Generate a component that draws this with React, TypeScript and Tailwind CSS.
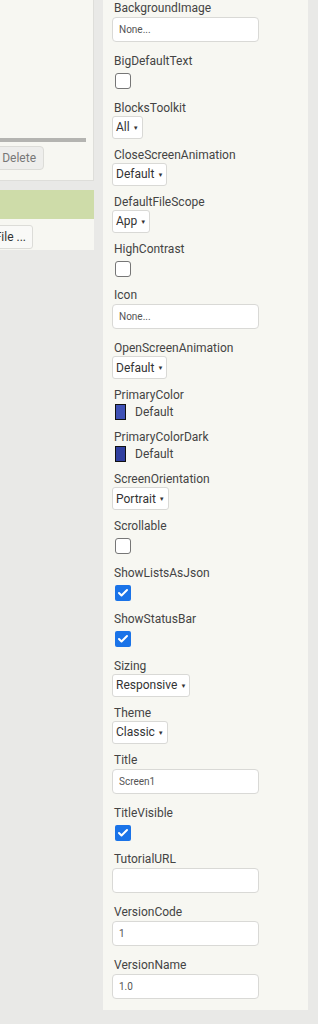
import { CheckIcon } from "lucide-react";

type Prop =
	| { name: string; kind: "text"; value: string }
	| { name: string; kind: "check"; checked: boolean }
	| { name: string; kind: "select"; value: string }
	| { name: string; kind: "color"; color: string };

const props: Prop[] = [
	{ name: "BackgroundImage", kind: "text", value: "None..." },
	{ name: "BigDefaultText", kind: "check", checked: false },
	{ name: "BlocksToolkit", kind: "select", value: "All" },
	{ name: "CloseScreenAnimation", kind: "select", value: "Default" },
	{ name: "DefaultFileScope", kind: "select", value: "App" },
	{ name: "HighContrast", kind: "check", checked: false },
	{ name: "Icon", kind: "text", value: "None..." },
	{ name: "OpenScreenAnimation", kind: "select", value: "Default" },
	{ name: "PrimaryColor", kind: "color", color: "#3f51b5" },
	{ name: "PrimaryColorDark", kind: "color", color: "#303f9f" },
	{ name: "ScreenOrientation", kind: "select", value: "Portrait" },
	{ name: "Scrollable", kind: "check", checked: false },
	{ name: "ShowListsAsJson", kind: "check", checked: true },
	{ name: "ShowStatusBar", kind: "check", checked: true },
	{ name: "Sizing", kind: "select", value: "Responsive" },
	{ name: "Theme", kind: "select", value: "Classic" },
	{ name: "Title", kind: "text", value: "Screen1" },
	{ name: "TitleVisible", kind: "check", checked: true },
	{ name: "TutorialURL", kind: "text", value: "" },
	{ name: "VersionCode", kind: "text", value: "1" },
	{ name: "VersionName", kind: "text", value: "1.0" },
];

function Control({ prop }: { prop: Prop }) {
	if (prop.kind === "text") {
		return (
			<div className="mt-px mb-[11px] flex h-[25px] w-[147px] items-center rounded-[4px] border border-[#d9d9d6] bg-white px-[6px] text-[10px] text-[#555]">
				{prop.value}
			</div>
		);
	}
	if (prop.kind === "check") {
		return (
			<div className="mt-[4px] mb-[10.5px] pl-[3px]">
				{prop.checked ? (
					<div className="flex size-[16px] items-center justify-center rounded-[2px] bg-[#1a73e8]">
						<CheckIcon className="size-[12px] text-white" strokeWidth={4} />
					</div>
				) : (
					<div className="size-[16px] rounded-[3px] border-[1.5px] border-[#767676] bg-white" />
				)}
			</div>
		);
	}
	if (prop.kind === "select") {
		return (
			<div className="mb-[8px] flex">
				<div className="flex h-[23px] items-center gap-[3px] rounded-[3px] border border-[#d9d9d6] bg-white pr-[3px] pl-[3px] text-[12px] text-[#333]">
					{prop.value}
					<span className="text-[6px] text-[#333]">▼</span>
				</div>
			</div>
		);
	}
	return (
		<div className="mt-px mb-[9px] flex h-[16px] items-center gap-[9px] pl-[3px]">
			<div
				className="h-[16px] w-[11px] border border-[#111]"
				style={{ backgroundColor: prop.color }}
			/>
			<span className="text-[12px] text-[#444]">Default</span>
		</div>
	);
}

export default function App() {
	return (
		<div
			className="flex h-[1024px] w-[318px] gap-[9px] overflow-hidden bg-[#e9e9e7]"
			style={{ fontFamily: "Roboto, 'Liberation Sans', sans-serif" }}
		>
			<div className="flex w-[94px] shrink-0 flex-col">
				<div className="relative h-[181px] border-r border-b border-[#dededa] bg-[#f7f7f2]">
					<div className="absolute top-[138px] left-0 h-[4px] w-[86px] bg-[#b4b4b1]" />
					<div className="absolute top-[146px] left-[-10px] flex h-[24px] w-[54px] items-center justify-end rounded-[4px] border border-[#dcdcd8] bg-[#eeeeec] pr-[7px] text-[12px] text-[#777]">
						Delete
					</div>
				</div>
				<div className="mt-[9px] h-[29px] bg-[#cedca9]" />
				<div className="relative h-[31px] bg-[#f7f7f2]">
					<div className="absolute top-[6px] left-[-10px] flex h-[24px] w-[43px] items-center justify-end rounded-[3px] border border-[#dcdcd8] bg-[#f9f9f7] pr-[6px] text-[12px] text-[#333]">
						File ...
					</div>
				</div>
			</div>
			<div className="h-[1010px] w-[205px] shrink-0 bg-[#f7f7f2] pl-[9px]">
				{props.map((p) => (
					<div key={p.name}>
						<div className="pl-[2px] text-[12px] leading-[16px] text-[#444]">
							{p.name}
						</div>
						<Control prop={p} />
					</div>
				))}
			</div>
		</div>
	);
}
